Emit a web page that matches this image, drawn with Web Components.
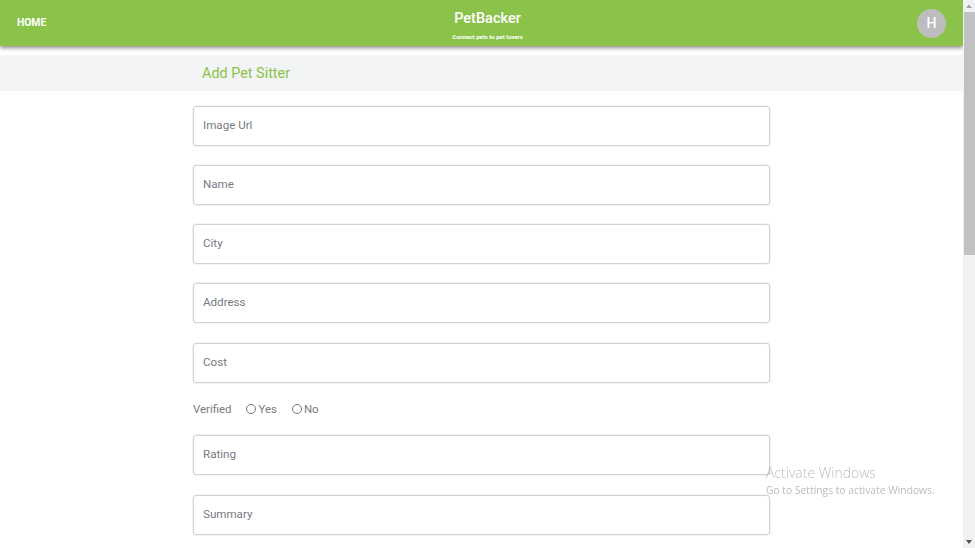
<!DOCTYPE html>
<html>
<head>
  <meta charset="utf-8" />
  <title>PetBacker</title>
  <style>
    html, body { margin: 0; height: 100%; overflow: hidden; }
    body {
      display: flex;
      font-family: Roboto, "Liberation Sans", sans-serif;
      background: #fff;
    }
    main-page { flex: 1; min-width: 0; }
  </style>

  <template id="top-bar">
    <style>
      :host {
        display: grid;
        grid-template-columns: 1fr auto 1fr;
        align-items: center;
        height: 46px;
        padding: 0 17px;
        background: #8bc34a;
        color: #fff;
        box-shadow: 0 2px 4px rgba(0, 0, 0, .45);
        position: relative;
      }
      .home { font-size: 10.300px; font-weight: 700; margin-top: -2px; }
      .brand { text-align: center; transform: translateX(6px); padding-top: 4px; }
      .brand b { display: block; font-size: 14.500px; font-weight: 500; line-height: 18px; }
      .brand small { display: block; font-size: 6px; font-weight: 700; line-height: 8px; margin-top: 5px; }
      .avatar {
        justify-self: end;
        width: 29px;
        height: 29px;
        border-radius: 50%;
        background: #bdbdbd;
        font-size: 14px;
        font-weight: 500;
        line-height: 29px;
        text-align: center;
      }
    </style>
    <div class="home">HOME</div>
    <div class="brand"><b>PetBacker</b><small>Connect pets to pet lovers</small></div>
    <div class="avatar">H</div>
  </template>

  <template id="page-title">
    <style>
      :host {
        display: block;
        margin-top: 9px;
        height: 36px;
        padding-left: 202px;
        background: #f3f4f6;
        color: #8bc34a;
        font-size: 14.400px;
        line-height: 37px;
      }
    </style>
    <slot></slot>
  </template>

  <template id="text-field">
    <style>
      :host {
        display: block;
        height: 40px;
        box-sizing: border-box;
        padding-left: 9px;
        border: 1px solid #d2d2d2;
        border-radius: 3px;
        box-shadow: 0 0 0 .5px #e8e8e8;
        color: #777b80;
        font-size: 11.600px;
        line-height: 37px;
      }
    </style>
    <slot></slot>
  </template>

  <template id="radio-row">
    <style>
      :host {
        display: flex;
        align-items: center;
        height: 14.200px;
        color: #777b80;
        font-size: 11.400px;
      }
      .label { margin-right: 15px; }
      .opt { display: flex; align-items: center; margin-right: 15px; }
      .dot {
        width: 8px;
        height: 8px;
        margin-right: 2px;
        border: 1px solid #777;
        border-radius: 50%;
      }
    </style>
    <span class="label">Verified</span>
    <span class="opt"><i class="dot"></i>Yes</span>
    <span class="opt"><i class="dot"></i>No</span>
  </template>

  <template id="main-page">
    <style>
      :host { display: block; height: 100%; overflow: hidden; }
      form {
        display: flex;
        flex-direction: column;
        gap: 19.250px;
        width: 577px;
        margin: 14.700px 0 0 193px;
      }
    </style>
    <top-bar></top-bar>
    <page-title>Add Pet Sitter</page-title>
    <form>
      <text-field>Image Url</text-field>
      <text-field>Name</text-field>
      <text-field>City</text-field>
      <text-field>Address</text-field>
      <text-field>Cost</text-field>
      <radio-row></radio-row>
      <text-field>Rating</text-field>
      <text-field>Summary</text-field>
    </form>
  </template>

  <template id="fake-scrollbar">
    <style>
      :host {
        display: flex;
        flex-direction: column;
        flex: none;
        width: 12px;
        height: 100%;
        background: #f1f1f1;
      }
      svg { display: block; flex: none; }
      .thumb { height: 243px; margin-left: 1px; background: #c1c1c1; }
      .fill { flex: 1; }
    </style>
    <svg width="12" height="12"><path d="M3 8h6L6 4.500z" fill="#a3a3a3"/></svg>
    <div class="thumb"></div>
    <div class="fill"></div>
    <svg width="12" height="12"><path d="M3 4h6L6 8z" fill="#505050"/></svg>
  </template>

  <template id="activate-note">
    <style>
      :host {
        position: fixed;
        left: 766px;
        top: 463px;
        color: rgba(120, 120, 120, .5);
        font-family: "Open Sans", "Liberation Sans", sans-serif;
        pointer-events: none;
      }
      div { white-space: nowrap; }
      .big { font-size: 14px; font-weight: 300; line-height: 19px; }
      .sub { font-size: 10.300px; line-height: 14px; margin-top: 1px; }
    </style>
    <div class="big">Activate Windows</div>
    <div class="sub">Go to Settings to activate Windows.</div>
  </template>
</head>
<body>
  <main-page></main-page>
  <fake-scrollbar></fake-scrollbar>
  <activate-note></activate-note>

  <script>
    // every element is just its template stamped into an open shadow root
    ['top-bar', 'page-title', 'text-field', 'radio-row', 'main-page', 'fake-scrollbar', 'activate-note'].forEach((name) => {
      customElements.define(name, class extends HTMLElement {
        constructor() {
          super();
          this.attachShadow({ mode: 'open' });
          this.shadowRoot.appendChild(document.getElementById(name).content.cloneNode(true));
        }
      });
    });
  </script>
</body>
</html>
